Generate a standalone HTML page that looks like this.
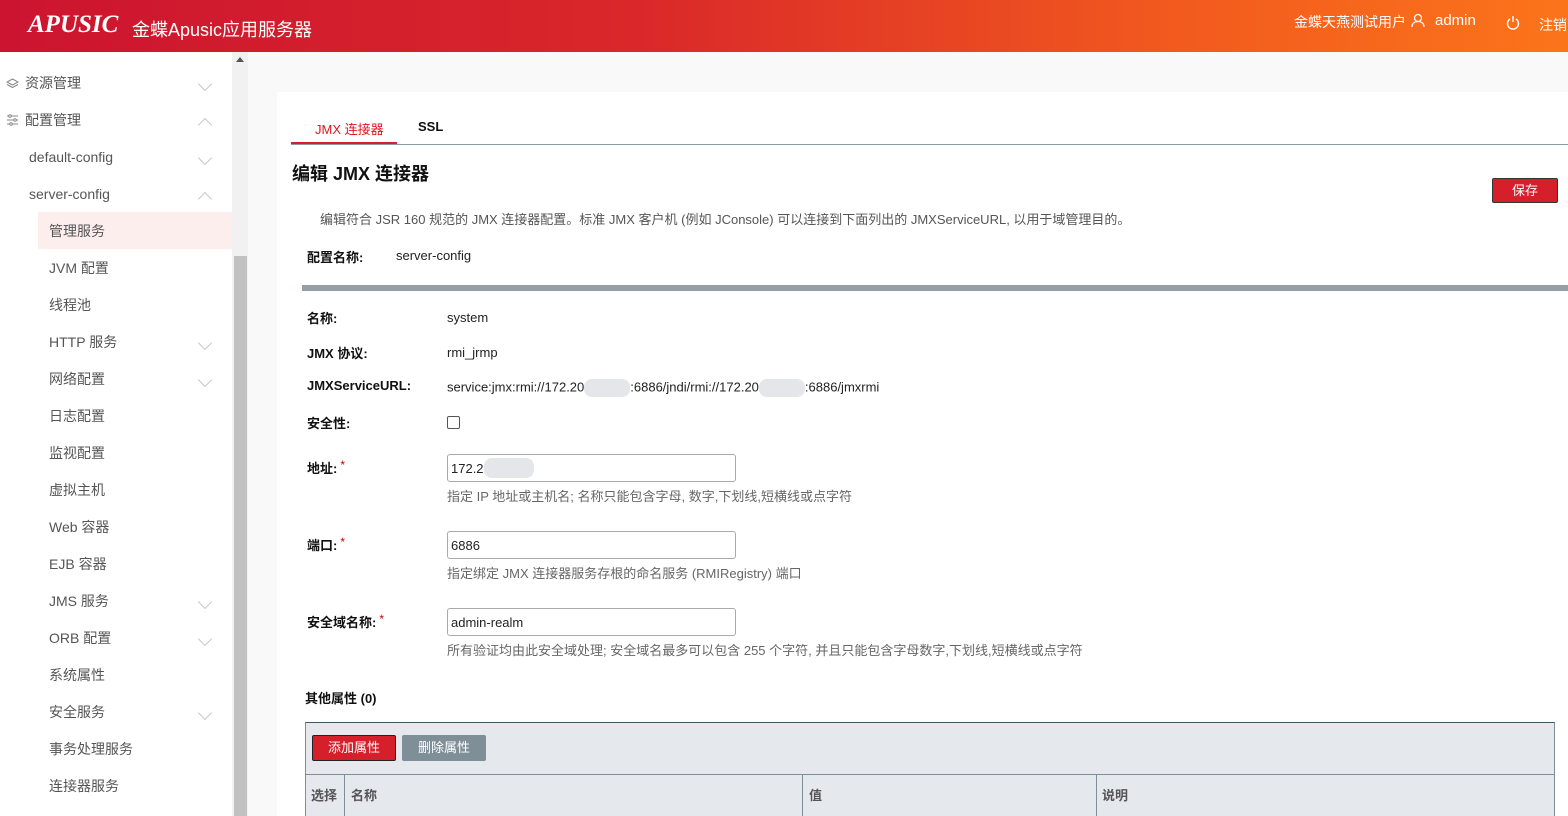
<!DOCTYPE html>
<html><head><meta charset="utf-8"><style>
*{box-sizing:border-box;margin:0;padding:0}
body{width:1568px;height:816px;overflow:hidden;font-family:"Liberation Sans","Noto Sans CJK SC",sans-serif;background:#f9f9f9;position:relative;color:#222}
.hdr{position:absolute;left:0;top:0;width:1568px;height:52px;background:linear-gradient(90deg,#cc1430 0%,#d9272a 40%,#f25a1e 75%,#fb741a 100%)}
.logo{position:absolute;left:28px;top:11px;color:#fff;font-family:"Liberation Serif",serif;font-style:italic;font-weight:bold;font-size:25px;letter-spacing:0px}
.ttl{position:absolute;left:132px;top:16px;color:#fff;font-size:18px}
.hr{position:absolute;top:12px;color:#fff;font-size:14px}
.side{position:absolute;left:0;top:52px;width:232px;height:764px;background:#fff}
.it{position:absolute;font-size:14px;color:#555;height:37px;line-height:37px;width:232px}
.ch{position:absolute;right:22px;top:14px;width:10px;height:10px;border-right:1.5px solid #c8c8c8;border-bottom:1.5px solid #c8c8c8;transform:rotate(45deg)}
.ch.up{transform:rotate(225deg);top:18px}
.sbt{position:absolute;left:232px;top:52px;width:16px;height:764px;background:#f1f1f1}
.thumb{position:absolute;left:234px;top:256px;width:13px;height:560px;background:#c1c1c1}
.main{position:absolute;left:277px;top:92px;width:1291px;height:724px;background:#fff}
.a{position:absolute;white-space:nowrap}
.lb{position:absolute;left:307px;font-size:13px;font-weight:bold;color:#111}
.v{position:absolute;left:447px;font-size:13px;color:#222}
.inp{position:absolute;left:447px;width:289px;height:28px;border:1px solid #aaa;border-radius:3px;font-size:13px;padding:6px 3px;background:#fff}
.hint{position:absolute;left:447px;font-size:13px;color:#666}
.star{color:#c00;font-weight:normal;vertical-align:top;font-size:12px;margin-left:3px}
.blur{display:inline-block;background:#e5e6e9;border-radius:8px;height:18px;vertical-align:middle}
</style></head><body>
<div class="hdr">
<div class="logo">APUSIC</div>
<div class="ttl">金蝶Apusic应用服务器</div>
<div class="hr" style="left:1294px">金蝶天燕测试用户</div>
<svg style="position:absolute;left:1411px;top:13px" width="14" height="15" viewBox="0 0 14 15"><circle cx="7" cy="5" r="3.5" fill="none" stroke="#fff" stroke-width="1.3"/><path d="M1 14c0-4 3-5.5 6-5.5s6 1.5 6 5.5" fill="none" stroke="#fff" stroke-width="1.3"/></svg>
<div class="hr" style="left:1435px;top:12px;font-size:15px">admin</div>
<svg style="position:absolute;left:1506px;top:15px" width="14" height="15" viewBox="0 0 14 15"><path d="M4 4a5.5 5.5 0 1 0 6 0" fill="none" stroke="#fff" stroke-width="1.4"/><path d="M7 1v6" stroke="#fff" stroke-width="1.4"/></svg>
<div class="hr" style="left:1539px;top:15px">注销</div>
</div>
<div class="side">
<div class="it" style="left:0;top:13px;padding-left:25px">资源管理<div class="ch"></div></div>
<svg style="position:absolute;left:6px;top:26px" width="13" height="12" viewBox="0 0 13 12"><path d="M6.5 1L12 4 6.5 7 1 4z M1 6.5l5.5 3 5.5-3" fill="none" stroke="#888"/></svg>
<div class="it" style="left:0;top:50px;padding-left:25px">配置管理<div class="ch up"></div></div>
<svg style="position:absolute;left:6px;top:62px" width="13" height="12" viewBox="0 0 13 12"><path d="M1 2h11M1 6h11M1 10h11" stroke="#888"/><circle cx="4" cy="2" r="1.3" fill="#fff" stroke="#888"/><circle cx="9" cy="6" r="1.3" fill="#fff" stroke="#888"/><circle cx="5" cy="10" r="1.3" fill="#fff" stroke="#888"/></svg>
<div class="it" style="left:0;top:87px;padding-left:29px">default-config<div class="ch"></div></div>
<div class="it" style="left:0;top:124px;padding-left:29px">server-config<div class="ch up"></div></div>
<div class="it" style="left:38px;top:160px;width:194px;padding-left:11px;background:#fdeeee;line-height:39px">管理服务</div>
<div class="it" style="top:198px;padding-left:49px">JVM 配置</div>
<div class="it" style="top:235px;padding-left:49px">线程池</div>
<div class="it" style="top:272px;padding-left:49px">HTTP 服务<div class="ch"></div></div>
<div class="it" style="top:309px;padding-left:49px">网络配置<div class="ch"></div></div>
<div class="it" style="top:346px;padding-left:49px">日志配置</div>
<div class="it" style="top:383px;padding-left:49px">监视配置</div>
<div class="it" style="top:420px;padding-left:49px">虚拟主机</div>
<div class="it" style="top:457px;padding-left:49px">Web 容器</div>
<div class="it" style="top:494px;padding-left:49px">EJB 容器</div>
<div class="it" style="top:531px;padding-left:49px">JMS 服务<div class="ch"></div></div>
<div class="it" style="top:568px;padding-left:49px">ORB 配置<div class="ch"></div></div>
<div class="it" style="top:605px;padding-left:49px">系统属性</div>
<div class="it" style="top:642px;padding-left:49px">安全服务<div class="ch"></div></div>
<div class="it" style="top:679px;padding-left:49px">事务处理服务</div>
<div class="it" style="top:716px;padding-left:49px">连接器服务</div>
</div>
<div class="sbt"></div><div class="thumb"></div>
<div class="a" style="left:236px;top:57px;width:0;height:0;border-left:4px solid transparent;border-right:4px solid transparent;border-bottom:5px solid #555"></div>
<div class="main"></div>
<div class="a" style="left:291px;top:144px;width:1277px;height:1px;background:#8a9aa4"></div>
<div class="a" style="left:291px;top:142px;width:106px;height:2px;background:#d51f2b"></div>
<div class="a" style="left:315px;top:119px;font-size:13px;color:#e0141e">JMX 连接器</div>
<div class="a" style="left:418px;top:119px;font-size:13px;font-weight:bold;color:#111">SSL</div>
<div class="a" style="left:292px;top:160px;font-size:18px;font-weight:bold;color:#111">编辑 JMX 连接器</div>
<div class="a" style="left:1492px;top:178px;width:66px;height:25px;background:#d51f2b;border:1px solid #333;border-radius:2px;color:#fff;font-size:13px;text-align:center;line-height:23px">保存</div>
<div class="a" style="left:320px;top:209px;font-size:13px;color:#555">编辑符合 JSR 160 规范的 JMX 连接器配置。标准 JMX 客户机 (例如 JConsole) 可以连接到下面列出的 JMXServiceURL, 以用于域管理目的。</div>
<div class="lb" style="top:247px">配置名称:</div>
<div class="a" style="left:396px;top:248px;font-size:13px">server-config</div>
<div class="a" style="left:302px;top:285px;width:1266px;height:6px;background:#949fa5"></div>
<div class="lb" style="top:308px">名称:</div><div class="v" style="top:310px">system</div>
<div class="lb" style="top:343px">JMX 协议:</div><div class="v" style="top:345px">rmi_jrmp</div>
<div class="lb" style="top:378px">JMXServiceURL:</div>
<div class="v" style="top:379px">service:jmx:rmi://172.20<span class="blur" style="width:46px"></span>:6886/jndi/rmi://172.20<span class="blur" style="width:46px"></span>:6886/jmxrmi</div>
<div class="lb" style="top:413px">安全性:</div>
<div class="a" style="left:447px;top:416px;width:13px;height:13px;border:1px solid #555;border-radius:2px"></div>
<div class="lb" style="top:458px">地址:<span class="star">*</span></div>
<div class="inp" style="top:454px">172.2<span class="blur" style="width:50px;height:20px;margin-top:-3px"></span></div>
<div class="hint" style="top:486px">指定 IP 地址或主机名; 名称只能包含字母, 数字,下划线,短横线或点字符</div>
<div class="lb" style="top:535px">端口:<span class="star">*</span></div>
<div class="inp" style="top:531px">6886</div>
<div class="hint" style="top:563px">指定绑定 JMX 连接器服务存根的命名服务 (RMIRegistry) 端口</div>
<div class="lb" style="top:612px">安全域名称:<span class="star">*</span></div>
<div class="inp" style="top:608px">admin-realm</div>
<div class="hint" style="top:640px">所有验证均由此安全域处理; 安全域名最多可以包含 255 个字符, 并且只能包含字母数字,下划线,短横线或点字符</div>
<div class="lb" style="left:305px;top:688px">其他属性 (0)</div>
<div class="a" style="left:305px;top:722px;width:1250px;height:94px;background:#e5e8ed;border-top:1px solid #3f5866;border-left:1px solid #7f8f98;border-right:1px solid #7f8f98"></div>
<div class="a" style="left:312px;top:735px;width:84px;height:26px;background:#d51f2b;border:1px solid #222;border-radius:2px;color:#fff;font-size:13px;text-align:center;line-height:24px">添加属性</div>
<div class="a" style="left:402px;top:735px;width:84px;height:26px;background:#7f8f98;border-radius:2px;color:#fff;font-size:13px;text-align:center;line-height:26px">删除属性</div>
<div class="a" style="left:305px;top:774px;width:1250px;height:1px;background:#7f8f98"></div>
<div class="a" style="left:344px;top:774px;width:1px;height:42px;background:#7f8f98"></div>
<div class="a" style="left:802px;top:774px;width:1px;height:42px;background:#7f8f98"></div>
<div class="a" style="left:1096px;top:774px;width:1px;height:42px;background:#7f8f98"></div>
<div class="a" style="left:311px;top:785px;font-size:13px;font-weight:bold;color:#555">选择</div>
<div class="a" style="left:351px;top:785px;font-size:13px;font-weight:bold;color:#555">名称</div>
<div class="a" style="left:809px;top:785px;font-size:13px;font-weight:bold;color:#555">值</div>
<div class="a" style="left:1102px;top:785px;font-size:13px;font-weight:bold;color:#555">说明</div>
</body></html>
